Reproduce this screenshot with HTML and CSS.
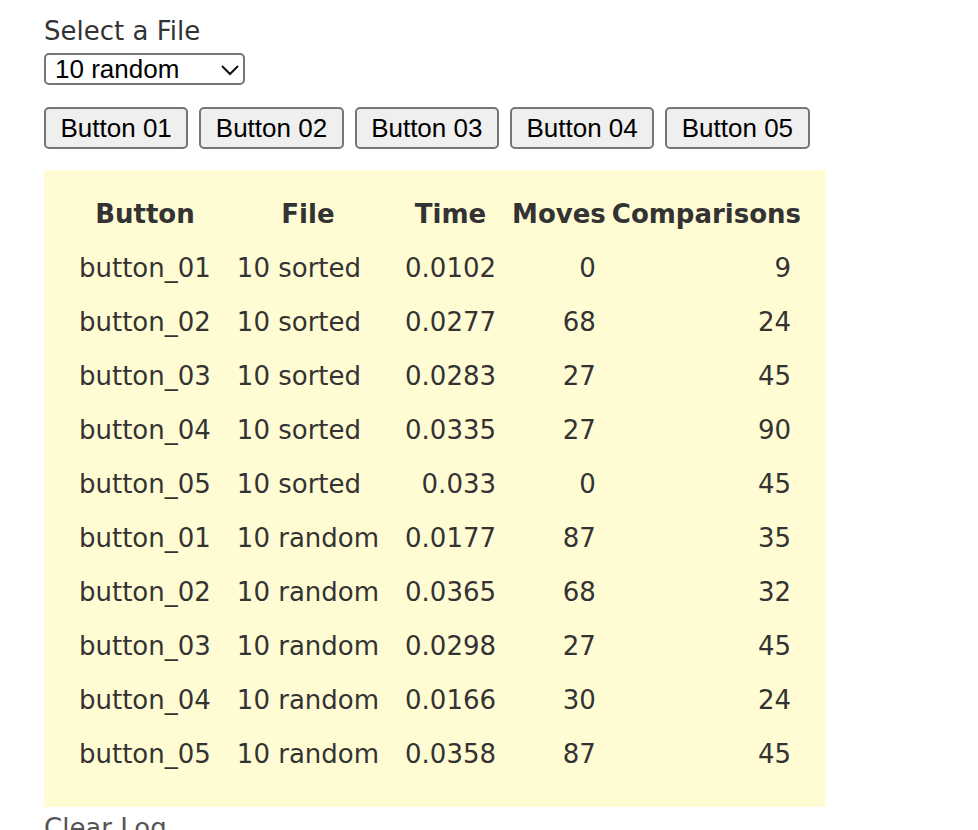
FILE: index.html
```html
<!DOCTYPE html>
<html>
<head>
<meta charset="utf-8">
<link rel="stylesheet" href="styles.css">
</head>
<body>
<div class="page">
  <div class="label">Select a File</div>
  <div class="select-wrap">
    <select class="file-select">
      <option>10 sorted</option>
      <option selected>10 random</option>
    </select>
    <svg class="chev" width="20" height="12" viewBox="0 0 20 12"><path d="M2 2 L10 10 L18 2" fill="none" stroke="#111" stroke-width="2"/></svg>
  </div>
  <div class="buttons">
    <button class="btn">Button 01</button>
    <button class="btn">Button 02</button>
    <button class="btn">Button 03</button>
    <button class="btn">Button 04</button>
    <button class="btn">Button 05</button>
  </div>
  <div class="log">
    <table class="results">
      <thead>
        <tr><th>Button</th><th>File</th><th>Time</th><th>Moves</th><th>Comparisons</th></tr>
      </thead>
      <tbody>
        <tr><td>button_01</td><td>10 sorted</td><td class="num">0.0102</td><td class="num">0</td><td class="num">9</td></tr>
        <tr><td>button_02</td><td>10 sorted</td><td class="num">0.0277</td><td class="num">68</td><td class="num">24</td></tr>
        <tr><td>button_03</td><td>10 sorted</td><td class="num">0.0283</td><td class="num">27</td><td class="num">45</td></tr>
        <tr><td>button_04</td><td>10 sorted</td><td class="num">0.0335</td><td class="num">27</td><td class="num">90</td></tr>
        <tr><td>button_05</td><td>10 sorted</td><td class="num">0.033</td><td class="num">0</td><td class="num">45</td></tr>
        <tr><td>button_01</td><td>10 random</td><td class="num">0.0177</td><td class="num">87</td><td class="num">35</td></tr>
        <tr><td>button_02</td><td>10 random</td><td class="num">0.0365</td><td class="num">68</td><td class="num">32</td></tr>
        <tr><td>button_03</td><td>10 random</td><td class="num">0.0298</td><td class="num">27</td><td class="num">45</td></tr>
        <tr><td>button_04</td><td>10 random</td><td class="num">0.0166</td><td class="num">30</td><td class="num">24</td></tr>
        <tr><td>button_05</td><td>10 random</td><td class="num">0.0358</td><td class="num">87</td><td class="num">45</td></tr>
      </tbody>
    </table>
  </div>
  <div class="clear">Clear Log</div>
</div>
</body>
</html>
```
FILE: styles.css
```css
html, body {
  margin: 0;
  padding: 0;
  background: #ffffff;
}
.page {
  padding: 16px 0 0 44px;
  font-family: "DejaVu Sans", Verdana, sans-serif;
  font-size: 26px;
  color: #333333;
}
.label {
  line-height: 30px;
  height: 30px;
}
.select-wrap {
  position: relative;
  width: 201px;
  height: 32px;
  margin-top: 7px;
}
.file-select {
  appearance: none;
  -webkit-appearance: none;
  width: 201px;
  height: 32px;
  box-sizing: border-box;
  border: 2px solid #767676;
  border-radius: 5px;
  background: #ffffff;
  font-family: "Liberation Sans", Arial, sans-serif;
  font-size: 26px;
  color: #000000;
  padding: 0 0 0 9px;
  margin: 0;
  line-height: 28px;
}
.chev {
  position: absolute;
  left: 176px;
  top: 11px;
  pointer-events: none;
}
.buttons {
  display: flex;
  gap: 11px;
  margin-top: 22px;
}
.btn {
  height: 42px;
  box-sizing: border-box;
  padding: 0 14.5px;
  border: 2px solid #767676;
  border-radius: 5px;
  background: #efefef;
  font-family: "Liberation Sans", Arial, sans-serif;
  font-size: 26px;
  color: #000000;
  margin: 0;
}
.log {
  display: inline-block;
  margin-top: 21px;
  background: #fffcd4;
  padding: 17px 22px 26px 22px;
}
.results {
  border-collapse: collapse;
  border-spacing: 0;
  font-size: 26px;
  color: #333333;
}
.results th {
  font-weight: bold;
  text-align: center;
  padding: 12px 3px;
  line-height: 30px;
}
.results td {
  text-align: left;
  padding: 12px 13px;
  line-height: 30px;
  white-space: nowrap;
}
.results td.num {
  text-align: right;
}
.clear {
  color: #555555;
  line-height: 30px;
}
```
